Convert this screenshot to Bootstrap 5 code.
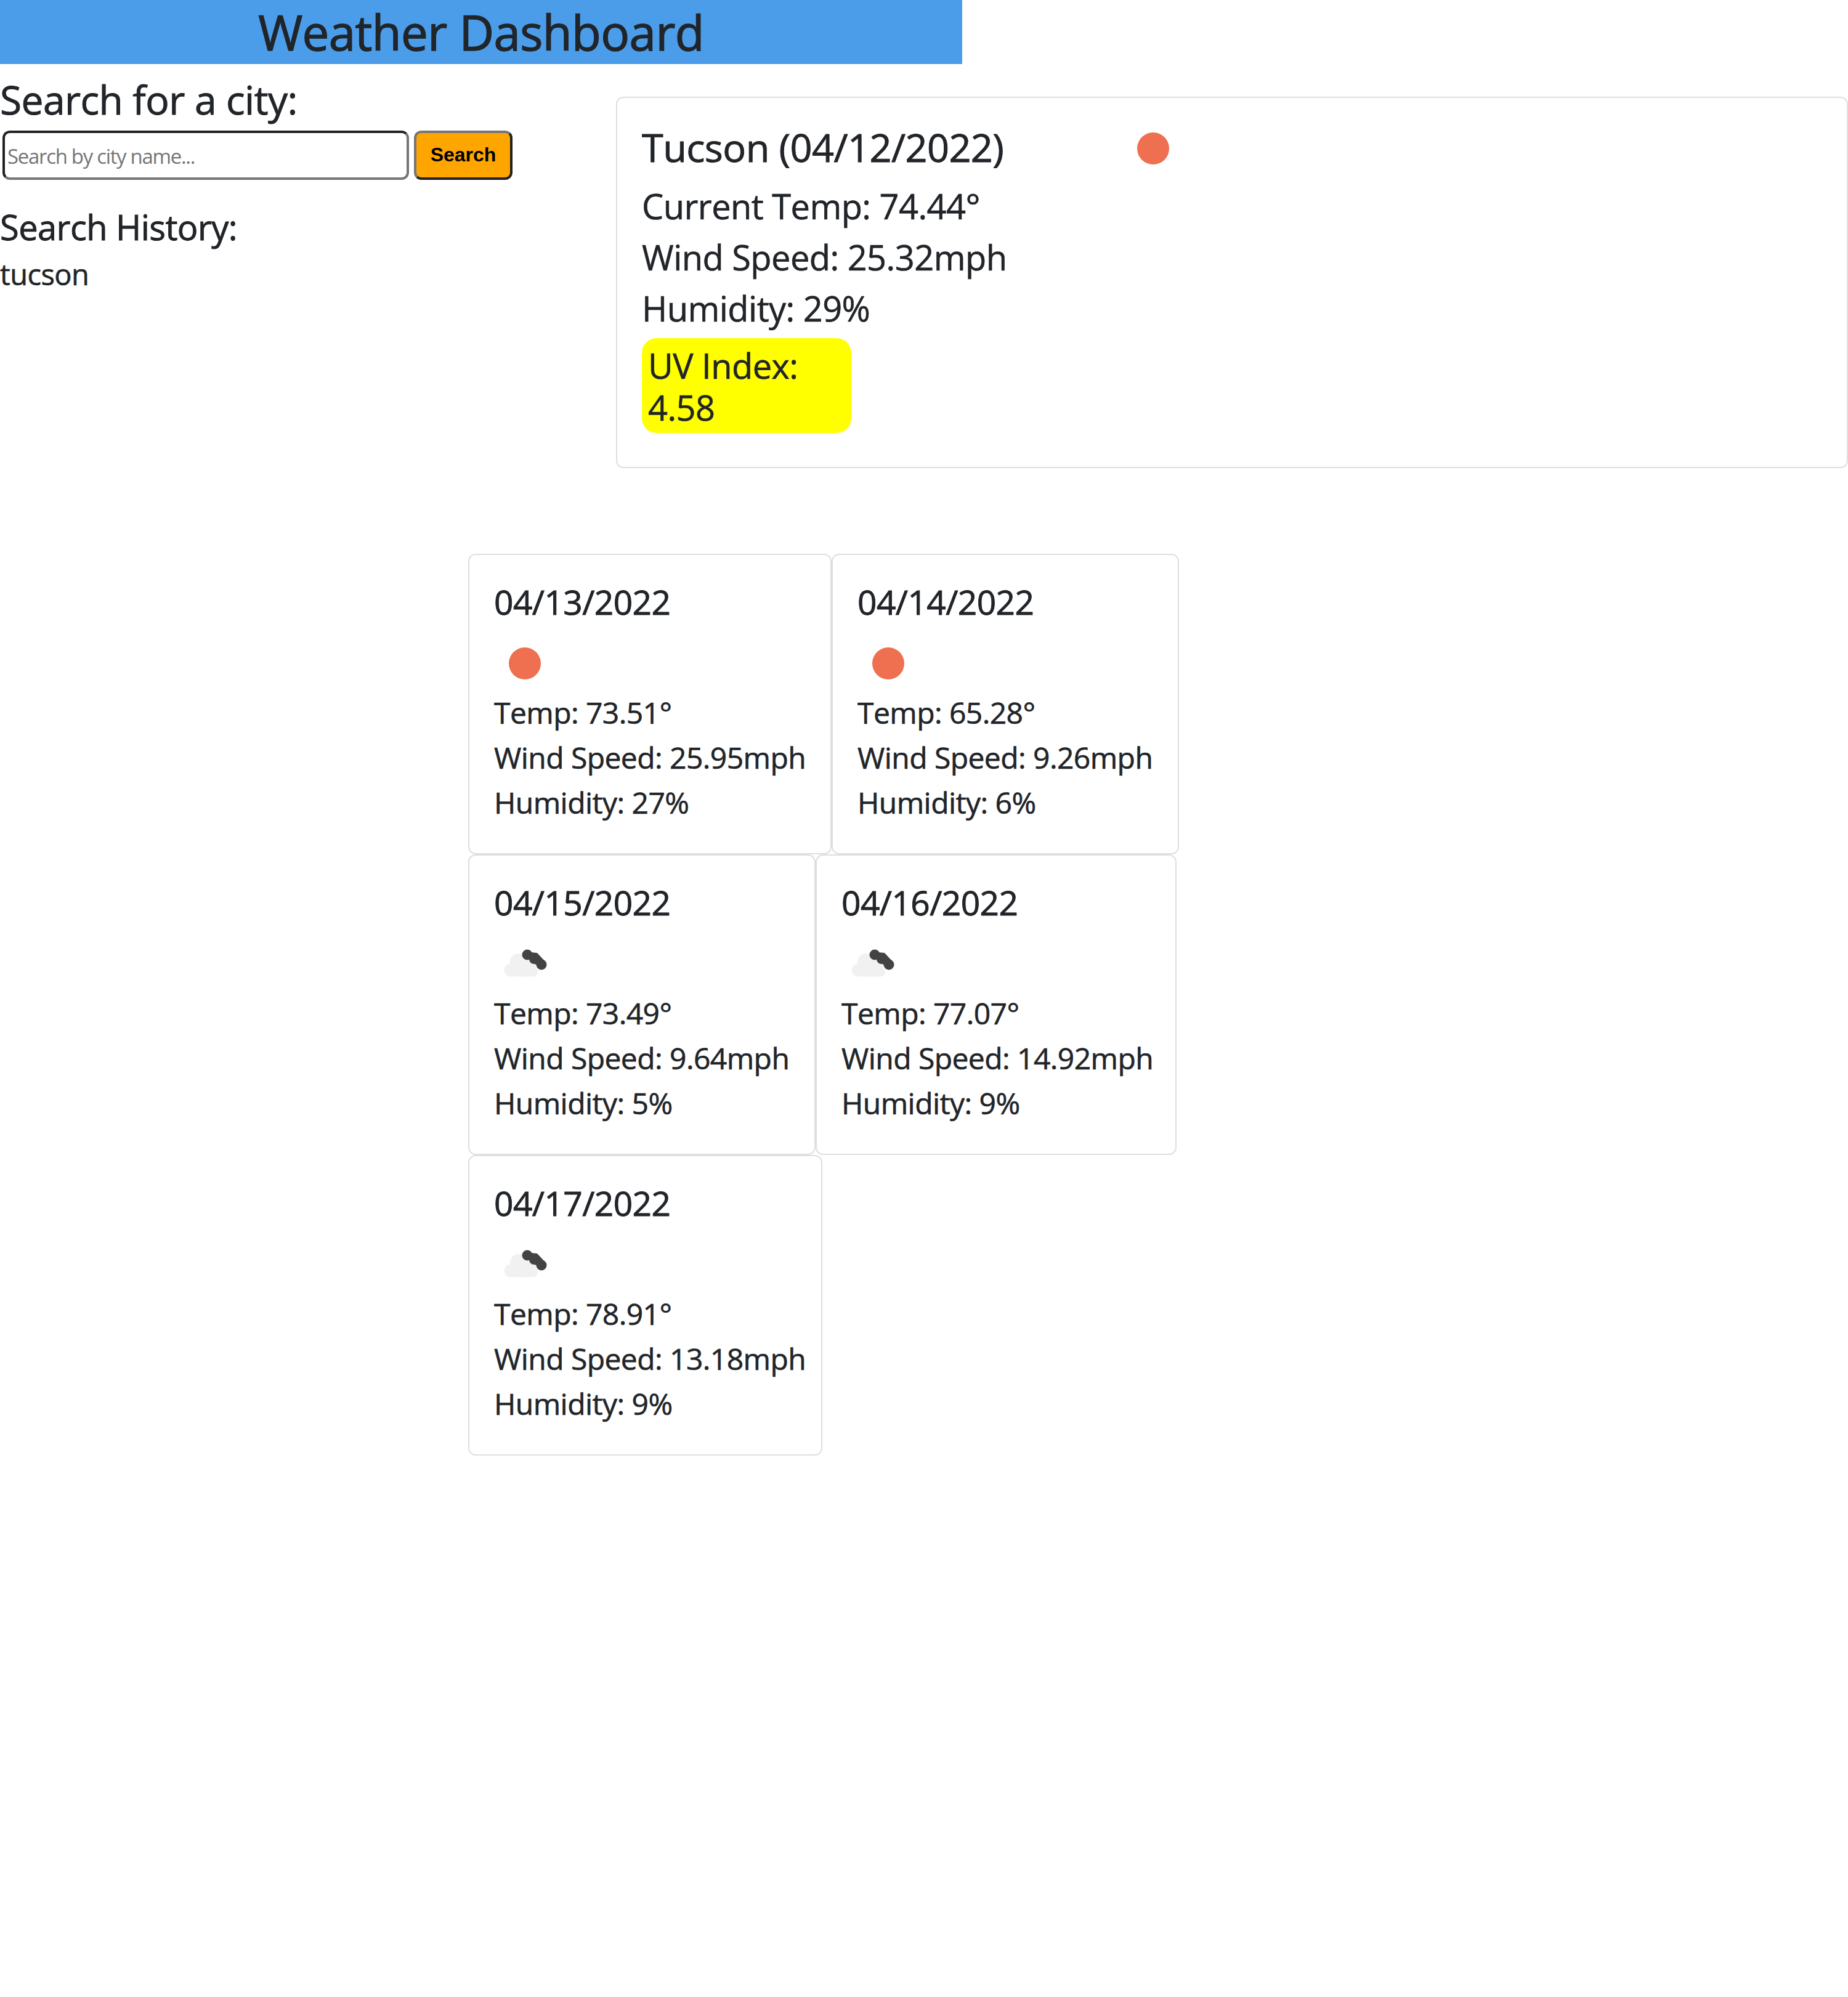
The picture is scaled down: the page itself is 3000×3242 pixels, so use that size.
<!DOCTYPE html>
<html lang="en"><head><meta charset="utf-8"><title>Weather Dashboard</title>
<link href="https://cdn.jsdelivr.net/npm/bootstrap@5.3.0/dist/css/bootstrap.min.css" rel="stylesheet">
<style>
body{font-family:"Open Sans",sans-serif;color:#212529;background:#fff;min-height:3242px;letter-spacing:-.035em;-webkit-text-stroke:.6px #212529}
.site-head{width:1562px;height:104px;background:#4c9de9}
.site-head h1{font-size:78px;line-height:104px;margin:0;font-weight:500;-webkit-text-stroke:1.4px #212529}
.left-col{width:1000px;flex:none}
.city-label{font-size:64px;line-height:72px;margin:0;padding-top:22px;font-weight:500;-webkit-text-stroke:.9px #212529}
.search-row{margin-top:14px;gap:8px;padding-left:4px}
.city-input{width:660px;height:80px;border-width:4px;border-style:solid;border-color:#212121 #767676 #767676 #212121;border-radius:12px;padding:6px 4px 4px;font-size:33px;outline:0;font-family:inherit;letter-spacing:-.04em;-webkit-text-stroke:0}
.city-input::placeholder{color:#757575}
.go-btn{width:160px;height:80px;background:#ffa500;border-width:4px;border-style:solid;border-color:#767676 #212121 #212121 #767676;border-radius:12px;font:700 32px "Liberation Sans",sans-serif;letter-spacing:0;color:#000;padding:0 0 2px;-webkit-text-stroke:0}
.hist-label{font-size:56px;line-height:68px;margin:42px 0 0;font-weight:500;-webkit-text-stroke:.9px #212529}
.hist-item{font-size:47px;line-height:68px;margin-top:9px}
.main-wrap{margin-top:53px;flex:1}
.wx-card{border:2px solid #dfdfdf;border-radius:12px;background:#fff}
.wx-card .card-body{padding:40px}
.main-title{font-size:63px;line-height:84px;height:94px;margin:-2px 0 2px;font-weight:500;gap:0;-webkit-text-stroke:.9px #212529}
.main-title span{width:780px;flex:none}
.main-line{font-size:56px;line-height:83px;margin:0}
.uv-box{width:340px;height:154px;background:#ff0;border-radius:24px;padding:10px 10px;font-size:56px;line-height:68px;margin:7px 0 15px}
.fc-wrap{margin:139px 0 0 760px;width:1160px}
.fc-a{width:590px}.fc-b{width:564px}.fc-c{width:564px}.fc-d{width:586px}.fc-e{width:575px}
.fc-card{height:488px}
.fc-title{font-size:55px;line-height:67px;margin:2px 0 17px;font-weight:500;-webkit-text-stroke:.9px #212529}
.fc-icon{display:block;width:100px;height:100px;margin-bottom:-7px}
.fc-line{font-size:48px;line-height:73px;margin:0;white-space:nowrap}
.main-icon{width:100px;height:100px;flex:none;margin-top:-6px}
</style></head>
<body>
<header class="site-head text-center"><h1>Weather Dashboard</h1></header>
<div class="d-flex">
  <aside class="left-col">
    <h2 class="city-label">Search for a city:</h2>
    <form class="d-flex search-row">
      <input class="city-input" type="text" placeholder="Search by city name...">
      <button class="go-btn" type="button">Search</button>
    </form>
    <h3 class="hist-label">Search History:</h3>
    <div class="hist-item">tucson</div>
  </aside>
  <section class="main-wrap">
    <div class="card wx-card"><div class="card-body">
      <h2 class="main-title d-flex"><span>Tucson (04/12/2022)</span>
        <svg class="main-icon" viewBox="0 0 100 100"><circle cx="50" cy="50" r="26" fill="#ee7050"/></svg></h2>
      <p class="main-line">Current Temp: 74.44°</p>
      <p class="main-line">Wind Speed: 25.32mph</p>
      <p class="main-line">Humidity: 29%</p>
      <div class="uv-box">UV Index: 4.58</div>
    </div></div>
  </section>
</div>
<section class="fc-wrap d-flex flex-wrap">
  <div class="card wx-card fc-card fc-a"><div class="card-body">
    <h3 class="fc-title">04/13/2022</h3>
    <svg class="fc-icon" viewBox="0 0 100 100"><circle cx="50" cy="50" r="26" fill="#ee7050"/></svg>
    <p class="fc-line">Temp: 73.51°</p><p class="fc-line">Wind Speed: 25.95mph</p><p class="fc-line">Humidity: 27%</p>
  </div></div>
  <div class="card wx-card fc-card fc-b"><div class="card-body">
    <h3 class="fc-title">04/14/2022</h3>
    <svg class="fc-icon" viewBox="0 0 100 100"><circle cx="50" cy="50" r="26" fill="#ee7050"/></svg>
    <p class="fc-line">Temp: 65.28°</p><p class="fc-line">Wind Speed: 9.26mph</p><p class="fc-line">Humidity: 6%</p>
  </div></div>
  <div class="card wx-card fc-card fc-c"><div class="card-body">
    <h3 class="fc-title">04/15/2022</h3>
    <svg class="fc-icon" viewBox="0 0 100 100"><g fill="#f1f1f1"><circle cx="40" cy="47" r="14"/><circle cx="27" cy="60" r="10.5"/><circle cx="55" cy="54" r="13"/><rect x="27" y="54" width="44" height="16.500" rx="8"/></g><g fill="#434343"><circle cx="54" cy="35" r="8.500"/><circle cx="65" cy="42" r="8"/><circle cx="77" cy="51" r="8.500"/><path d="M50 30 70 32 84 47 76 56 60 46Z"/></g></svg>
    <p class="fc-line">Temp: 73.49°</p><p class="fc-line">Wind Speed: 9.64mph</p><p class="fc-line">Humidity: 5%</p>
  </div></div>
  <div class="card wx-card fc-card fc-d"><div class="card-body">
    <h3 class="fc-title">04/16/2022</h3>
    <svg class="fc-icon" viewBox="0 0 100 100"><g fill="#f1f1f1"><circle cx="40" cy="47" r="14"/><circle cx="27" cy="60" r="10.5"/><circle cx="55" cy="54" r="13"/><rect x="27" y="54" width="44" height="16.500" rx="8"/></g><g fill="#434343"><circle cx="54" cy="35" r="8.500"/><circle cx="65" cy="42" r="8"/><circle cx="77" cy="51" r="8.500"/><path d="M50 30 70 32 84 47 76 56 60 46Z"/></g></svg>
    <p class="fc-line">Temp: 77.07°</p><p class="fc-line">Wind Speed: 14.92mph</p><p class="fc-line">Humidity: 9%</p>
  </div></div>
  <div class="card wx-card fc-card fc-e"><div class="card-body">
    <h3 class="fc-title">04/17/2022</h3>
    <svg class="fc-icon" viewBox="0 0 100 100"><g fill="#f1f1f1"><circle cx="40" cy="47" r="14"/><circle cx="27" cy="60" r="10.5"/><circle cx="55" cy="54" r="13"/><rect x="27" y="54" width="44" height="16.500" rx="8"/></g><g fill="#434343"><circle cx="54" cy="35" r="8.500"/><circle cx="65" cy="42" r="8"/><circle cx="77" cy="51" r="8.500"/><path d="M50 30 70 32 84 47 76 56 60 46Z"/></g></svg>
    <p class="fc-line">Temp: 78.91°</p><p class="fc-line">Wind Speed: 13.18mph</p><p class="fc-line">Humidity: 9%</p>
  </div></div>
</section>
</body></html>
